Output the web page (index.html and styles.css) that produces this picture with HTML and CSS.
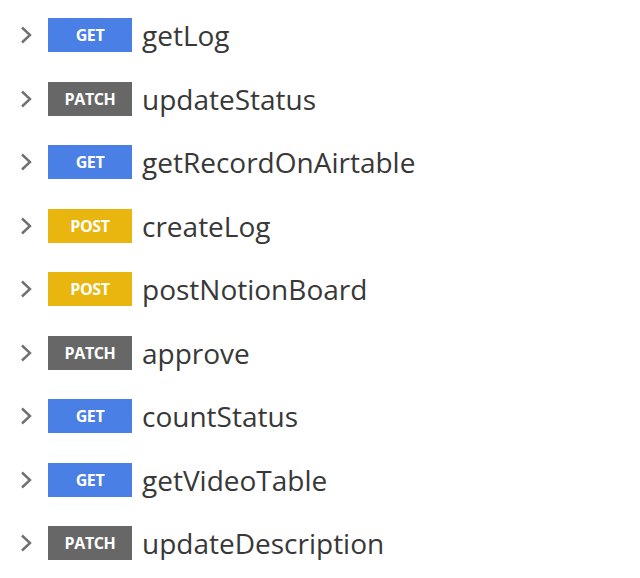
FILE: index.html
```html
<!DOCTYPE html>
<html>
<head>
<meta charset="utf-8">
<link rel="stylesheet" href="styles.css">
</head>
<body>
<ul class="ops">
  <li class="op"><svg class="chev" viewBox="0 0 12 18"><path d="M2 1.5 L10 9 L2 16.5"/></svg><span class="badge get">GET</span><span class="name">getLog</span></li>
  <li class="op"><svg class="chev" viewBox="0 0 12 18"><path d="M2 1.5 L10 9 L2 16.5"/></svg><span class="badge patch">PATCH</span><span class="name">updateStatus</span></li>
  <li class="op"><svg class="chev" viewBox="0 0 12 18"><path d="M2 1.5 L10 9 L2 16.5"/></svg><span class="badge get">GET</span><span class="name">getRecordOnAirtable</span></li>
  <li class="op"><svg class="chev" viewBox="0 0 12 18"><path d="M2 1.5 L10 9 L2 16.5"/></svg><span class="badge post">POST</span><span class="name">createLog</span></li>
  <li class="op"><svg class="chev" viewBox="0 0 12 18"><path d="M2 1.5 L10 9 L2 16.5"/></svg><span class="badge post">POST</span><span class="name">postNotionBoard</span></li>
  <li class="op"><svg class="chev" viewBox="0 0 12 18"><path d="M2 1.5 L10 9 L2 16.5"/></svg><span class="badge patch">PATCH</span><span class="name">approve</span></li>
  <li class="op"><svg class="chev" viewBox="0 0 12 18"><path d="M2 1.5 L10 9 L2 16.5"/></svg><span class="badge get">GET</span><span class="name">countStatus</span></li>
  <li class="op"><svg class="chev" viewBox="0 0 12 18"><path d="M2 1.5 L10 9 L2 16.5"/></svg><span class="badge get">GET</span><span class="name">getVideoTable</span></li>
  <li class="op"><svg class="chev" viewBox="0 0 12 18"><path d="M2 1.5 L10 9 L2 16.5"/></svg><span class="badge patch">PATCH</span><span class="name">updateDescription</span></li>
</ul>
</body>
</html>
```
FILE: styles.css
```css
html, body {
  margin: 0;
  padding: 0;
  background: #ffffff;
}
body {
  font-family: "Open Sans", "Noto Sans", sans-serif;
}
.ops {
  list-style: none;
  margin: 0;
  padding: 18px 0 0 0;
  display: flex;
  flex-direction: column;
  gap: 29.5px;
}
.op {
  display: flex;
  align-items: center;
  height: 34px;
}
.chev {
  width: 12px;
  height: 18px;
  margin-left: 20px;
  margin-right: 16px;
  fill: none;
  stroke: #707070;
  stroke-width: 2.4;
}
.badge {
  width: 84px;
  height: 34px;
  display: flex;
  align-items: center;
  justify-content: center;
  color: #ffffff;
  font-weight: 700;
  font-size: 16px;
  letter-spacing: -0.4px;
}
.get { background: #4a80e6; }
.patch { background: #676767; }
.post { background: #e8b60e; }
.name {
  margin-left: 10px;
  font-size: 28px;
  color: #383838;
  line-height: 34px;
}
```
